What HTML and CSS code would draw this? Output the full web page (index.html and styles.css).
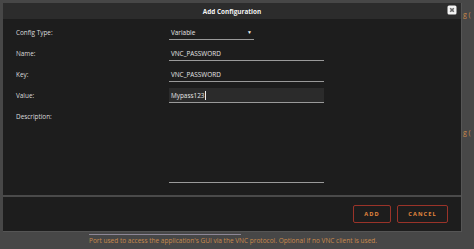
FILE: index.html
```html
<!DOCTYPE html>
<html>
<head>
<meta charset="utf-8">
<link rel="stylesheet" href="styles.css">
</head>
<body>
<div class="under">
  <div class="frag frag-top">g (</div>
  <div class="frag frag-mid">g (</div>
  <div class="help">
    <div class="help-line"></div>
    <div class="help-text">Port used to access the application's GUI via the VNC protocol. Optional if no VNC client is used.</div>
  </div>
</div>

<div class="modal">
  <div class="modal-head">
    <span class="modal-title">Add Configuration</span>
    <button class="close" aria-label="close">
      <svg viewBox="0 0 10 10" width="10" height="10"><rect x="0.5" y="0.5" width="9" height="9" rx="1.5" fill="#f4f4f4"/><path d="M3.2 3.2 L6.8 6.8 M6.8 3.2 L3.2 6.8" stroke="#666" stroke-width="1.6"/></svg>
    </button>
  </div>
  <div class="modal-body">
    <div class="form">
      <label class="lbl">Config Type:</label>
      <div class="field select"><span>Variable</span><span class="arrow">&#9660;</span></div>

      <label class="lbl">Name:</label>
      <div class="field">VNC_PASSWORD</div>

      <label class="lbl">Key:</label>
      <div class="field">VNC_PASSWORD</div>

      <label class="lbl">Value:</label>
      <div class="field active">Mypass123<span class="caret"></span></div>

      <label class="lbl lbl-top">Description:</label>
      <div class="field area"></div>
    </div>
  </div>
  <div class="modal-foot">
    <button class="btn btn-add">ADD</button>
    <button class="btn btn-cancel">CANCEL</button>
  </div>
</div>
</body>
</html>
```

FILE: styles.css
```css
* { box-sizing: border-box; }
html, body { margin: 0; padding: 0; }
body {
  width: 474px;
  height: 249px;
  overflow: hidden;
  background: #474747;
  font-family: "Open Sans", "Noto Sans", sans-serif;
  position: relative;
}
.under {
  display: flex;
  flex-direction: column;
  height: 249px;
}
.frag {
  color: #c98a4c;
  font-size: 7px;
  padding-left: 463px;
  white-space: nowrap;
  line-height: 10px;
}
.frag-top { margin-top: 10px; }
.frag-mid { margin-top: 108px; }
.help {
  margin-top: auto;
  padding-left: 89px;
  padding-bottom: 4px;
}
.help-line {
  width: 152px;
  height: 1px;
  background: #8d8796;
  margin-bottom: 1px;
}
.help-text {
  color: #c98a4c;
  font-size: 6.5px;
  line-height: 9px;
  white-space: nowrap;
}

.modal {
  position: absolute;
  left: 3px;
  top: 3px;
  width: 459px;
  height: 229px;
  background: #1d1d1d;
  border-right: 1px solid #555;
  border-bottom: 1px solid #555;
  display: flex;
  flex-direction: column;
}
.modal-head {
  height: 16px;
  background: #2c2c2c;
  display: flex;
  align-items: center;
  justify-content: center;
  position: relative;
}
.modal-title {
  color: #f2f2f2;
  font-size: 6.4px;
  font-weight: 700;
}
.close {
  position: absolute;
  right: 4px;
  top: 2px;
  width: 10px;
  height: 10px;
  padding: 0;
  border: 0;
  background: transparent;
  display: block;
}
.close svg { display: block; }

.modal-body {
  height: 178px;
  border-bottom: 2px solid #4a4a4a;
  padding: 6px 0 0 13px;
}
.form {
  display: grid;
  grid-template-columns: 153px 155px;
  grid-auto-rows: 15px;
  row-gap: 6px;
  align-items: center;
}
.lbl {
  color: #dcdcdc;
  font-size: 6.4px;
  line-height: 15px;
}
.lbl-top { align-self: start; }
.field {
  height: 15px;
  color: #e6e6e6;
  font-size: 6.4px;
  line-height: 13px;
  padding-left: 2px;
  border-bottom: 1.5px solid #9a9a9a;
  display: flex;
  align-items: center;
}
.select {
  width: 85px;
  justify-content: space-between;
  padding-right: 2px;
}
.arrow { font-size: 5px; color: #eee; }
.active { background: #2b2b2b; }
.caret {
  display: inline-block;
  width: 1px;
  height: 9px;
  background: #eee;
  margin-left: 1px;
}
.area {
  grid-row: span 4;
  height: 75px;
  align-self: start;
  margin-top: -1px;
}
.modal-foot {
  flex: 1;
  display: flex;
  justify-content: flex-end;
  align-items: center;
  gap: 6px;
  padding-right: 13px;
}
.btn {
  height: 18px;
  background: #1d1d1d;
  border: 1px solid #9a3329;
  border-radius: 2px;
  color: #e6873e;
  font-family: "Open Sans", "Noto Sans", sans-serif;
  font-size: 5.6px;
  font-weight: 700;
  letter-spacing: 1.1px;
  padding: 0;
}
.btn-add { width: 38px; }
.btn-cancel { width: 51px; }
```
